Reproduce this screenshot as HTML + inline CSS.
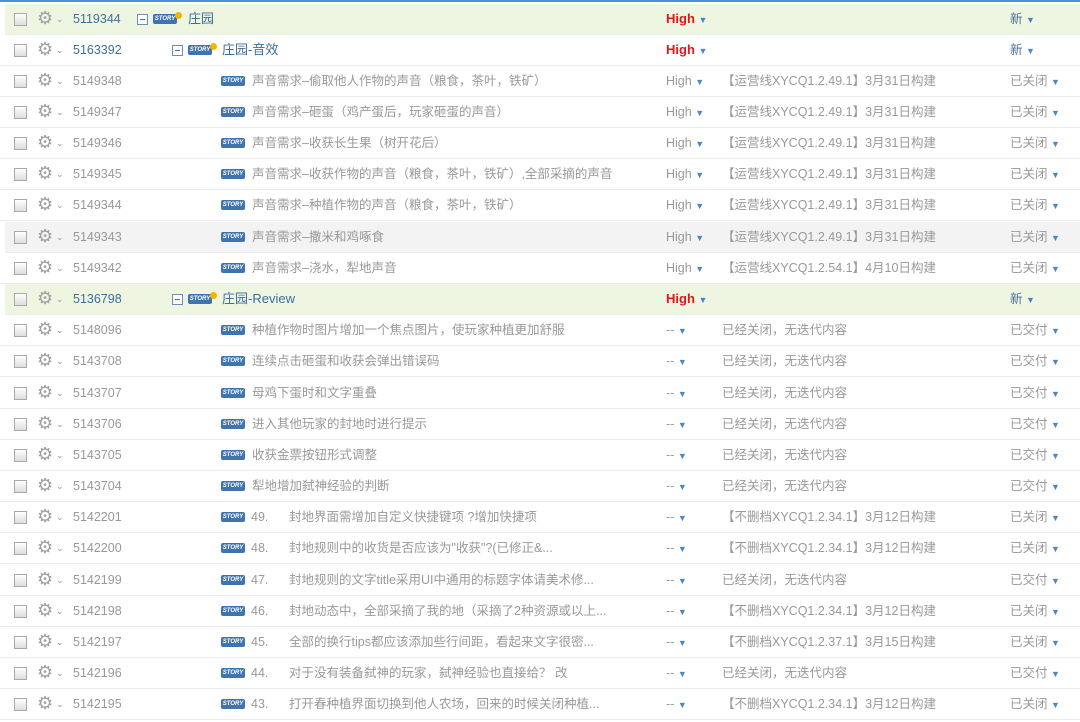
<!DOCTYPE html>
<html><head><meta charset="utf-8"><style>
body{margin:0;width:1080px;height:722px;overflow:hidden;background:#fff;font-family:"Liberation Sans","Noto Sans CJK SC",sans-serif;font-size:12.5px;color:#999;position:relative}
.top{position:absolute;left:0;top:0;width:1080px;height:2px;background:#4a8fd8}
.r{position:absolute;left:0;width:1080px;height:30px;border-bottom:1px solid #ececec;margin-top:2px}
.r.g{background:#eef6e2;left:5px;width:1075px}
.r.h{background:#f3f3f3;left:5px;width:1075px}
.r>*{position:absolute;top:0;line-height:30px;white-space:nowrap}
.cb{left:14px!important;top:9px!important;width:11px;height:11px;border:1px solid #aaa;background:linear-gradient(#fff,#ddd);line-height:0!important}
.g .cb,.h .cb{left:9px!important}
.gear{left:37px;font-size:18px;color:#a0a0a0;font-family:"DejaVu Sans",sans-serif}
.g .gear,.h .gear{left:32px}
.gc{left:56px;font-size:9px;color:#999}
.g .gc,.h .gc{left:51px}
.id{left:73px}
.g .id,.h .id{left:68px}
.b .id{color:#3d6f9c}
.bd{top:10px!important;width:24px;height:10px;background:#3f74b0;border-radius:2px;color:#fff;font-size:6px;line-height:10px!important;text-align:center;font-weight:bold}
.sun{top:8px!important;width:7px;height:7px;border-radius:50%;background:#f4b400;line-height:0!important}
.mn{top:10px!important;width:9px;height:9px;border:1px solid #6a8fb8;background:#fff;line-height:0!important}
.mn::after{content:"";position:absolute;left:2px;top:4px;width:5px;height:1px;background:#4a6f9c}
.t{color:#999}
.b .t{color:#3d6f9c;font-size:13px}
.p{left:666px}
.b .p{color:#e8121a;font-weight:bold;font-size:13px}
.bl{left:722px}
.s{left:1010px}
.b .s{color:#4a6f9c}
.ar{color:#4a86c8;font-size:9px}
</style></head><body>
<div class="top"></div>

<div class="r g b" style="top:2px"><i class="cb"></i><span class="gear">⚙</span><span class="gc">⌄</span><span class="id">5119344</span><i class="mn" style="left:132px"></i><i class="bd" style="left:148px">STORY</i><i class="sun" style="left:170px"></i><span class="t" style="left:183px">庄园</span><span class="p" style="left:661px">High <span class="ar">▼</span></span><span class="s" style="left:1005px">新 <span class="ar">▼</span></span></div>

<div class="r b" style="top:33px"><i class="cb"></i><span class="gear">⚙</span><span class="gc">⌄</span><span class="id">5163392</span><i class="mn" style="left:172px"></i><i class="bd" style="left:188px">STORY</i><i class="sun" style="left:210px"></i><span class="t" style="left:222px">庄园-音效</span><span class="p">High <span class="ar">▼</span></span><span class="s">新 <span class="ar">▼</span></span></div>

<div class="r" style="top:64px"><i class="cb"></i><span class="gear">⚙</span><span class="gc">⌄</span><span class="id">5149348</span><i class="bd" style="left:221px">STORY</i><span class="t" style="left:252px">声音需求–偷取他人作物的声音（粮食，茶叶，铁矿）</span><span class="p">High <span class="ar">▼</span></span><span class="bl">【运营线XYCQ1.2.49.1】3月31日构建</span><span class="s">已关闭 <span class="ar">▼</span></span></div>

<div class="r" style="top:95px"><i class="cb"></i><span class="gear">⚙</span><span class="gc">⌄</span><span class="id">5149347</span><i class="bd" style="left:221px">STORY</i><span class="t" style="left:252px">声音需求–砸蛋（鸡产蛋后，玩家砸蛋的声音）</span><span class="p">High <span class="ar">▼</span></span><span class="bl">【运营线XYCQ1.2.49.1】3月31日构建</span><span class="s">已关闭 <span class="ar">▼</span></span></div>

<div class="r" style="top:126px"><i class="cb"></i><span class="gear">⚙</span><span class="gc">⌄</span><span class="id">5149346</span><i class="bd" style="left:221px">STORY</i><span class="t" style="left:252px">声音需求–收获长生果（树开花后）</span><span class="p">High <span class="ar">▼</span></span><span class="bl">【运营线XYCQ1.2.49.1】3月31日构建</span><span class="s">已关闭 <span class="ar">▼</span></span></div>

<div class="r" style="top:157px"><i class="cb"></i><span class="gear">⚙</span><span class="gc">⌄</span><span class="id">5149345</span><i class="bd" style="left:221px">STORY</i><span class="t" style="left:252px">声音需求–收获作物的声音（粮食，茶叶，铁矿）,全部采摘的声音</span><span class="p">High <span class="ar">▼</span></span><span class="bl">【运营线XYCQ1.2.49.1】3月31日构建</span><span class="s">已关闭 <span class="ar">▼</span></span></div>

<div class="r" style="top:188px"><i class="cb"></i><span class="gear">⚙</span><span class="gc">⌄</span><span class="id">5149344</span><i class="bd" style="left:221px">STORY</i><span class="t" style="left:252px">声音需求–种植作物的声音（粮食，茶叶，铁矿）</span><span class="p">High <span class="ar">▼</span></span><span class="bl">【运营线XYCQ1.2.49.1】3月31日构建</span><span class="s">已关闭 <span class="ar">▼</span></span></div>

<div class="r h" style="top:220px"><i class="cb"></i><span class="gear">⚙</span><span class="gc">⌄</span><span class="id">5149343</span><i class="bd" style="left:216px">STORY</i><span class="t" style="left:247px">声音需求–撒米和鸡啄食</span><span class="p" style="left:661px">High <span class="ar">▼</span></span><span class="bl" style="left:717px">【运营线XYCQ1.2.49.1】3月31日构建</span><span class="s" style="left:1005px">已关闭 <span class="ar">▼</span></span></div>

<div class="r" style="top:251px"><i class="cb"></i><span class="gear">⚙</span><span class="gc">⌄</span><span class="id">5149342</span><i class="bd" style="left:221px">STORY</i><span class="t" style="left:252px">声音需求–浇水，犁地声音</span><span class="p">High <span class="ar">▼</span></span><span class="bl">【运营线XYCQ1.2.54.1】4月10日构建</span><span class="s">已关闭 <span class="ar">▼</span></span></div>

<div class="r g b" style="top:282px"><i class="cb"></i><span class="gear">⚙</span><span class="gc">⌄</span><span class="id">5136798</span><i class="mn" style="left:167px"></i><i class="bd" style="left:183px">STORY</i><i class="sun" style="left:205px"></i><span class="t" style="left:217px">庄园-Review</span><span class="p" style="left:661px">High <span class="ar">▼</span></span><span class="s" style="left:1005px">新 <span class="ar">▼</span></span></div>

<div class="r" style="top:313px"><i class="cb"></i><span class="gear">⚙</span><span class="gc">⌄</span><span class="id">5148096</span><i class="bd" style="left:221px">STORY</i><span class="t" style="left:252px">种植作物时图片增加一个焦点图片，使玩家种植更加舒服</span><span class="p">-- <span class="ar">▼</span></span><span class="bl">已经关闭，无迭代内容</span><span class="s">已交付 <span class="ar">▼</span></span></div>

<div class="r" style="top:344px"><i class="cb"></i><span class="gear">⚙</span><span class="gc">⌄</span><span class="id">5143708</span><i class="bd" style="left:221px">STORY</i><span class="t" style="left:252px">连续点击砸蛋和收获会弹出错误码</span><span class="p">-- <span class="ar">▼</span></span><span class="bl">已经关闭，无迭代内容</span><span class="s">已交付 <span class="ar">▼</span></span></div>

<div class="r" style="top:376px"><i class="cb"></i><span class="gear">⚙</span><span class="gc">⌄</span><span class="id">5143707</span><i class="bd" style="left:221px">STORY</i><span class="t" style="left:252px">母鸡下蛋时和文字重叠</span><span class="p">-- <span class="ar">▼</span></span><span class="bl">已经关闭，无迭代内容</span><span class="s">已交付 <span class="ar">▼</span></span></div>

<div class="r" style="top:407px"><i class="cb"></i><span class="gear">⚙</span><span class="gc">⌄</span><span class="id">5143706</span><i class="bd" style="left:221px">STORY</i><span class="t" style="left:252px">进入其他玩家的封地时进行提示</span><span class="p">-- <span class="ar">▼</span></span><span class="bl">已经关闭，无迭代内容</span><span class="s">已交付 <span class="ar">▼</span></span></div>

<div class="r" style="top:438px"><i class="cb"></i><span class="gear">⚙</span><span class="gc">⌄</span><span class="id">5143705</span><i class="bd" style="left:221px">STORY</i><span class="t" style="left:252px">收获金票按钮形式调整</span><span class="p">-- <span class="ar">▼</span></span><span class="bl">已经关闭，无迭代内容</span><span class="s">已交付 <span class="ar">▼</span></span></div>

<div class="r" style="top:469px"><i class="cb"></i><span class="gear">⚙</span><span class="gc">⌄</span><span class="id">5143704</span><i class="bd" style="left:221px">STORY</i><span class="t" style="left:252px">犁地增加弑神经验的判断</span><span class="p">-- <span class="ar">▼</span></span><span class="bl">已经关闭，无迭代内容</span><span class="s">已交付 <span class="ar">▼</span></span></div>

<div class="r" style="top:500px"><i class="cb"></i><span class="gear">⚙</span><span class="gc">⌄</span><span class="id">5142201</span><i class="bd" style="left:221px">STORY</i><span class="t" style="left:251px">49.</span><span class="t" style="left:289px">封地界面需增加自定义快捷键项 ?增加快捷项</span><span class="p">-- <span class="ar">▼</span></span><span class="bl">【不删档XYCQ1.2.34.1】3月12日构建</span><span class="s">已关闭 <span class="ar">▼</span></span></div>

<div class="r" style="top:531px"><i class="cb"></i><span class="gear">⚙</span><span class="gc">⌄</span><span class="id">5142200</span><i class="bd" style="left:221px">STORY</i><span class="t" style="left:251px">48.</span><span class="t" style="left:289px">封地规则中的收货是否应该为"收获"?(已修正&...</span><span class="p">-- <span class="ar">▼</span></span><span class="bl">【不删档XYCQ1.2.34.1】3月12日构建</span><span class="s">已关闭 <span class="ar">▼</span></span></div>

<div class="r" style="top:563px"><i class="cb"></i><span class="gear">⚙</span><span class="gc">⌄</span><span class="id">5142199</span><i class="bd" style="left:221px">STORY</i><span class="t" style="left:251px">47.</span><span class="t" style="left:289px">封地规则的文字title采用UI中通用的标题字体请美术修...</span><span class="p">-- <span class="ar">▼</span></span><span class="bl">已经关闭，无迭代内容</span><span class="s">已交付 <span class="ar">▼</span></span></div>

<div class="r" style="top:594px"><i class="cb"></i><span class="gear">⚙</span><span class="gc">⌄</span><span class="id">5142198</span><i class="bd" style="left:221px">STORY</i><span class="t" style="left:251px">46.</span><span class="t" style="left:289px">封地动态中，全部采摘了我的地（采摘了2种资源或以上...</span><span class="p">-- <span class="ar">▼</span></span><span class="bl">【不删档XYCQ1.2.34.1】3月12日构建</span><span class="s">已关闭 <span class="ar">▼</span></span></div>

<div class="r" style="top:625px"><i class="cb"></i><span class="gear">⚙</span><span class="gc">⌄</span><span class="id">5142197</span><i class="bd" style="left:221px">STORY</i><span class="t" style="left:251px">45.</span><span class="t" style="left:289px">全部的换行tips都应该添加些行间距，看起来文字很密...</span><span class="p">-- <span class="ar">▼</span></span><span class="bl">【不删档XYCQ1.2.37.1】3月15日构建</span><span class="s">已关闭 <span class="ar">▼</span></span></div>

<div class="r" style="top:656px"><i class="cb"></i><span class="gear">⚙</span><span class="gc">⌄</span><span class="id">5142196</span><i class="bd" style="left:221px">STORY</i><span class="t" style="left:251px">44.</span><span class="t" style="left:289px">对于没有装备弑神的玩家，弑神经验也直接给？ 改</span><span class="p">-- <span class="ar">▼</span></span><span class="bl">已经关闭，无迭代内容</span><span class="s">已交付 <span class="ar">▼</span></span></div>

<div class="r" style="top:687px"><i class="cb"></i><span class="gear">⚙</span><span class="gc">⌄</span><span class="id">5142195</span><i class="bd" style="left:221px">STORY</i><span class="t" style="left:251px">43.</span><span class="t" style="left:289px">打开春种植界面切换到他人农场，回来的时候关闭种植...</span><span class="p">-- <span class="ar">▼</span></span><span class="bl">【不删档XYCQ1.2.34.1】3月12日构建</span><span class="s">已关闭 <span class="ar">▼</span></span></div>

</body></html>
